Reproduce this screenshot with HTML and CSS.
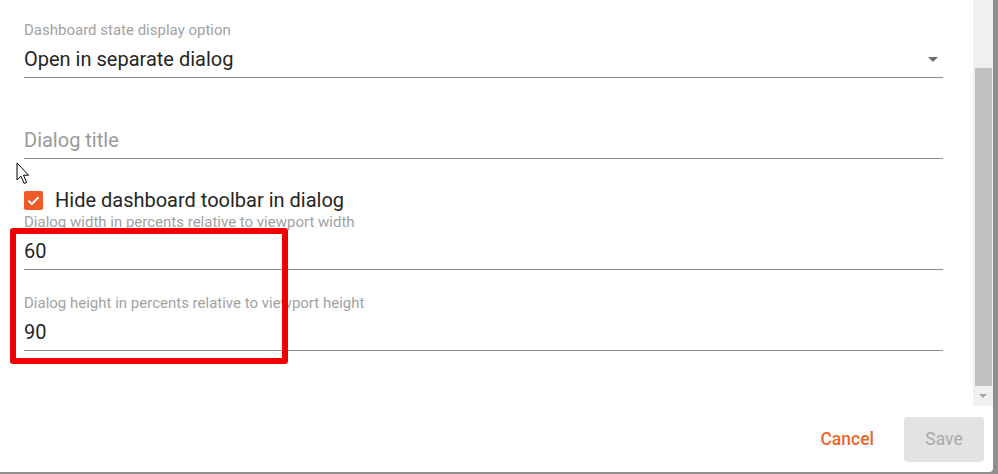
FILE: index.html
```html
<!DOCTYPE html>
<html>
<head>
<meta charset="utf-8">
<link rel="stylesheet" href="styles.css">
</head>
<body>
<div class="page">
  <div class="dialog">
    <div class="main">
      <div class="form">
        <div class="field">
          <div class="label">Dashboard state display option</div>
          <div class="value select">
            <span>Open in separate dialog</span>
            <span class="caret"></span>
          </div>
        </div>
        <div class="field spaced">
          <div class="label"></div>
          <div class="value placeholder">Dialog title</div>
        </div>
        <div class="check-row">
          <span class="box">
            <svg width="19" height="19" viewBox="0 0 19 19"><path d="M4.5 9.8 L7.8 13 L14.5 6.2" fill="none" stroke="#fff" stroke-width="2"/></svg>
          </span>
          <span class="check-label">Hide dashboard toolbar in dialog</span>
        </div>
        <div class="field">
          <div class="label">Dialog width in percents relative to viewport width</div>
          <div class="value">60</div>
        </div>
        <div class="field spaced">
          <div class="label">Dialog height in percents relative to viewport height</div>
          <div class="value">90</div>
        </div>
      </div>
      <div class="scrollbar">
        <div class="thumb"></div>
        <div class="arrow"><span class="arrow-tri"></span></div>
      </div>
    </div>
    <div class="actions">
      <button class="btn cancel">Cancel</button>
      <button class="btn save">Save</button>
    </div>
  </div>
  <div class="highlight"></div>
  <svg class="cursor" width="14" height="23" viewBox="0 0 14 23"><path d="M1 1 L1 18 L5 14.2 L8.2 21.5 L10.6 20.4 L7.5 13.2 L12.6 13.2 Z" fill="#fff" stroke="#000" stroke-width="1" stroke-linejoin="round"/></svg>
</div>
</body>
</html>
```
FILE: styles.css
```css
html, body {
  margin: 0;
  padding: 0;
}
body {
  width: 998px;
  height: 474px;
  overflow: hidden;
  background: #8f8f8f;
  font-family: Roboto, "Liberation Sans", sans-serif;
}
.page {
  position: relative;
  width: 998px;
  height: 474px;
}
.dialog {
  width: 993px;
  height: 472px;
  background: #fff;
  border-radius: 0 0 4px 0;
  display: flex;
  flex-direction: column;
}
.main {
  display: flex;
  height: 406px;
}
.form {
  flex: 1;
  padding: 22px 30px 0 24px;
  display: flex;
  flex-direction: column;
}
.field {
  display: flex;
  flex-direction: column;
  border-bottom: 1px solid #8e8e8e;
}
.field.spaced {
  margin-top: 25px;
}
.label {
  height: 16px;
  line-height: 16px;
  font-size: 15px;
  color: #a2a2a2;
  white-space: nowrap;
}
.value {
  margin-top: 8px;
  height: 26px;
  line-height: 26px;
  padding-bottom: 5px;
  font-size: 20px;
  color: #252525;
}
.value.placeholder {
  color: #9a9a9a;
}
.select {
  display: flex;
  justify-content: space-between;
  align-items: center;
}
.caret {
  width: 0;
  height: 0;
  border-left: 5.5px solid transparent;
  border-right: 5.5px solid transparent;
  border-top: 5.5px solid #6f6f6f;
  margin-right: 5px;
}
.check-row {
  margin-top: 27px;
  height: 28px;
  display: flex;
  align-items: center;
}
.box {
  width: 19px;
  height: 19px;
  border-radius: 2px;
  background: #f05a28;
  display: flex;
}
.check-label {
  margin-left: 12px;
  font-size: 20px;
  color: #252525;
}
.scrollbar {
  width: 20px;
  background: #f0f0f0;
  display: flex;
  flex-direction: column;
  padding-top: 68px;
  box-sizing: border-box;
}
.thumb {
  margin: 0 1px 0 2px;
  height: 318px;
  background: #c1c1c1;
}
.arrow {
  flex: 1;
  display: flex;
  align-items: center;
  justify-content: center;
}
.arrow-tri {
  width: 0;
  height: 0;
  border-left: 4px solid transparent;
  border-right: 4px solid transparent;
  border-top: 4px solid #a3a3a3;
}
.actions {
  flex: 1;
  display: flex;
  justify-content: flex-end;
  align-items: center;
  padding-right: 9px;
}
.btn {
  font-family: Roboto, "Liberation Sans", sans-serif;
  font-size: 17.5px;
  font-weight: 500;
  border: none;
  border-radius: 4px;
  height: 45px;
  cursor: pointer;
}
.cancel {
  background: transparent;
  color: #e8682b;
  padding: 0 15px;
  margin-right: 15px;
}
.save {
  width: 80px;
  background: #e3e3e3;
  color: #a9a9a9;
  font-weight: 400;
}
.highlight {
  position: absolute;
  left: 10px;
  top: 228px;
  width: 266px;
  height: 124px;
  border: 6px solid #f20000;
  border-radius: 3px;
}
.cursor {
  position: absolute;
  left: 16px;
  top: 162px;
}
```
